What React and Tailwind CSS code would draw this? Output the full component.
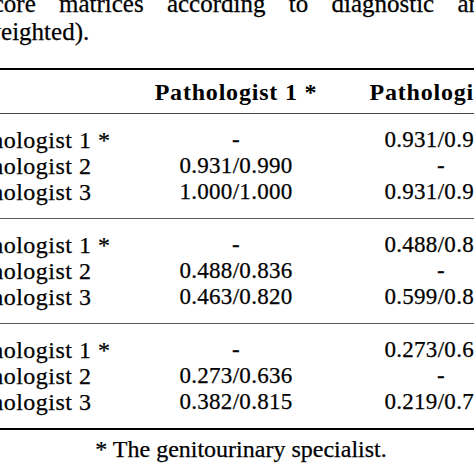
const groups = [
  [
    ["Pathologist 1 *", "-", "0.931/0.990"],
    ["Pathologist 2", "0.931/0.990", "-"],
    ["Pathologist 3", "1.000/1.000", "0.931/0.990"],
  ],
  [
    ["Pathologist 1 *", "-", "0.488/0.836"],
    ["Pathologist 2", "0.488/0.836", "-"],
    ["Pathologist 3", "0.463/0.820", "0.599/0.867"],
  ],
  [
    ["Pathologist 1 *", "-", "0.273/0.636"],
    ["Pathologist 2", "0.273/0.636", "-"],
    ["Pathologist 3", "0.382/0.815", "0.219/0.750"],
  ],
];

export default function App() {
  return (
    <div className="h-[474px] w-[474px] overflow-hidden bg-white font-['Liberation_Serif','Times_New_Roman',serif] text-[23px] text-black [-webkit-text-stroke:0.25px_#000]">
      {/* caption, justified and cut off at the top and left */}
      <div className="-ml-[17px] -mt-[10px] whitespace-nowrap text-[25px] leading-[28px]">
        <p className="[word-spacing:17px]">
          score matrices according to diagnostic and grading groups (linear
        </p>
        <p>weighted).</p>
      </div>

      <div className="-ml-[41px] mt-[22px] w-[640px] whitespace-nowrap border-t-2 border-black">
        <div className="grid h-[44px] grid-cols-[177px_200px_210px] items-center border-b border-[#444] text-[24px] font-bold tracking-[0.8px] [-webkit-text-stroke:0px]">
          <span />
          <span className="text-center">Pathologist 1 *</span>
          <span className="text-center">Pathologist 2</span>
        </div>
        {groups.map((group, i) => (
          <div
            key={i}
            className={
              i < groups.length - 1
                ? "border-b-[1.5px] border-[#5a5a5a] py-[13px]"
                : "border-b-2 border-black py-[13px]"
            }
          >
            {group.map((row, j) => (
              <div
                key={j}
                className="grid h-[26px] grid-cols-[177px_200px_210px] leading-[26px]"
              >
                <span className="text-[24px] tracking-[0.5px]">{row[0]}</span>
                <span className="text-center tracking-[0.3px]">{row[1]}</span>
                <span className="text-center tracking-[0.3px]">{row[2]}</span>
              </div>
            ))}
          </div>
        ))}
      </div>

      <p className="mt-[5px] pl-[8px] text-center text-[24px] leading-[28px]">
        * The genitourinary specialist.
      </p>
    </div>
  );
}
